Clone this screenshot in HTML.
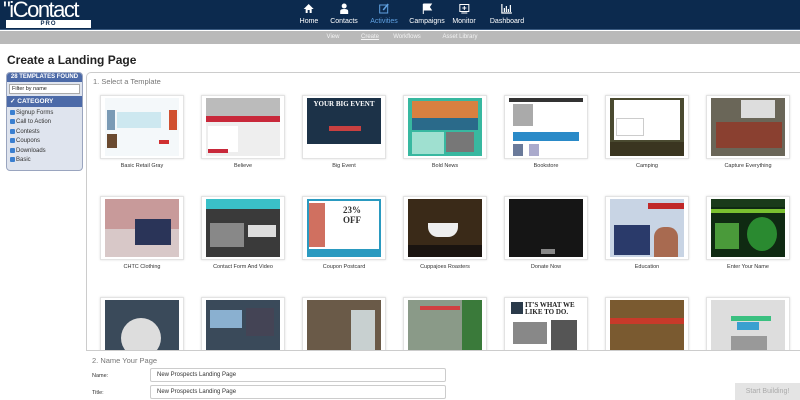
<!DOCTYPE html>
<html><head><meta charset="utf-8"><style>
*{margin:0;padding:0;box-sizing:border-box}
body{width:800px;height:400px;overflow:hidden;background:#fff;font-family:"Liberation Sans",sans-serif;position:relative}
.hdr{position:absolute;left:0;top:0;width:800px;height:30px;background:#0c2a4e;border-bottom:1px solid #3a5a80}
.logo{position:absolute;left:3px;top:0px;color:#fff;font-size:22px;letter-spacing:-1.5px;font-family:"Liberation Sans Narrow","Liberation Sans",sans-serif;line-height:20px}
.pro{position:absolute;left:6px;top:20px;width:85px;height:8px;background:#fff;color:#0c2a4e;font-size:6px;font-weight:bold;text-align:center;line-height:8px;letter-spacing:1px}
.nav{position:absolute;top:0;height:30px;text-align:center;color:#fff;font-size:7px;transform:translateX(-50%)}
.nav .ic{display:block;margin:3px auto 0;width:12px;height:11px}
.nav span{display:block;margin-top:4px;white-space:nowrap}
.sub{position:absolute;top:31px;left:0;width:800px;height:13px;background:#b9b9b9}
.sub span{position:absolute;top:3px;font-size:6px;color:#f4f4f4;transform:translateX(-50%)}
h1{position:absolute;left:7px;top:53px;font-size:12px;color:#222;font-weight:bold;font-family:"Liberation Sans Narrow","Liberation Sans",sans-serif}
.side{position:absolute;left:6px;top:72px;width:77px;height:99px;background:#dfe4ee;border:1px solid #9aa5bf;border-radius:4px;overflow:hidden}
.side .t{background:#4c6aa8;color:#fff;font-size:6px;font-weight:bold;text-align:center;height:9px;line-height:9px}
.side .f{margin:2px 2px;height:10px;background:#fff;border:1px solid #aaa;font-size:5.5px;line-height:8px;padding-left:2px;color:#222}
.side .c{background:#4c6aa8;color:#fff;font-size:6.5px;font-weight:bold;height:11px;line-height:11px;padding-left:3px;margin-top:1px;margin-bottom:2px}
.side .i{font-size:6px;color:#333;height:9.4px;line-height:9.4px;padding-left:3px}
.side .i b{display:inline-block;width:5px;height:5px;background:#3a7fd0;margin-right:1px;vertical-align:-1px;border-radius:1px}
.main{position:absolute;left:86px;top:72px;width:720px;height:290px;border:1px solid #ccc;border-radius:5px 0 0 0;border-right:none}
.sel{position:absolute;left:93px;top:77px;font-size:7.5px;color:#777}
.th{position:absolute;width:84px;height:64px;border:1px solid #e3e3e3;box-shadow:0 0 2px #ddd;background:#fff;padding:2px 4px;overflow:hidden}
.th .in{width:100%;height:100%;position:relative;overflow:hidden}
.lb{position:absolute;width:84px;text-align:center;font-size:5.5px;color:#333}
.bot{position:absolute;left:86px;top:350px;width:714px;height:50px;background:#fff;border-top:1px solid #ccc}
.bot .h{position:absolute;left:6px;top:5px;font-size:7.5px;color:#777}
.bot .l{position:absolute;left:6px;font-size:5.5px;color:#333}
.bot .inp{position:absolute;left:64px;width:296px;height:14px;border:1px solid #ccc;border-radius:2px;font-size:6px;line-height:12px;padding-left:6px;color:#333}
.btn{position:absolute;left:735px;top:383px;width:65px;height:17px;background:#e4e4e4;color:#aaa;font-size:7px;line-height:17px;text-align:center}
</style></head><body>
<div class="hdr">
<div class="logo">"iContact</div>
<div class="pro">PRO</div>
<div class="nav" style="left:309px"><svg class="ic" viewBox="0 0 12 11"><path d="M6 1L1 6h2v4h2V7h2v3h2V6h2z" fill="#fff"/></svg><span>Home</span></div>
<div class="nav" style="left:344px"><svg class="ic" viewBox="0 0 12 11"><circle cx="6" cy="3" r="2.5" fill="#fff"/><path d="M2 11V8q0-2 4-2t4 2v3z" fill="#fff"/></svg><span>Contacts</span></div>
<div class="nav" style="left:384px;color:#5fa0e0"><svg class="ic" viewBox="0 0 12 11"><rect x="1.5" y="2" width="8" height="8" fill="none" stroke="#5fa0e0"/><path d="M5 7l5-6" stroke="#5fa0e0" stroke-width="1.5"/></svg><span>Activities</span></div>
<div class="nav" style="left:427px"><svg class="ic" viewBox="0 0 12 11"><path d="M2 1v10M2 1h8l-2 3 2 3H2" fill="#fff" stroke="#fff"/></svg><span>Campaigns</span></div>
<div class="nav" style="left:464px"><svg class="ic" viewBox="0 0 12 11"><rect x="1.5" y="1.5" width="9" height="7" fill="none" stroke="#fff"/><path d="M4 5h4M6 3v4M3 10h6" stroke="#fff"/></svg><span>Monitor</span></div>
<div class="nav" style="left:507px"><svg class="ic" viewBox="0 0 12 11"><path d="M1 1v9h10M3.5 9V5M5.5 9V3M7.5 9V6M9.5 9V2" stroke="#fff" fill="none" stroke-width="1.2"/></svg><span>Dashboard</span></div>
</div>
<div class="sub"><span style="left:333px">View</span><span style="left:370px;text-decoration:underline">Create</span><span style="left:407px">Workflows</span><span style="left:460px">Asset Library</span></div>
<h1>Create a Landing Page</h1>
<div class="side"><div class="t">28 TEMPLATES FOUND</div><div class="f">Filter by name</div><div class="c">✓ CATEGORY</div>
<div class="i"><b></b>Signup Forms</div><div class="i"><b></b>Call to Action</div><div class="i"><b></b>Contests</div><div class="i"><b></b>Coupons</div><div class="i"><b></b>Downloads</div><div class="i"><b></b>Basic</div></div>
<div class="main"></div>
<div class="sel">1. Select a Template</div>

<div class="th" style="left:100px;top:95px"><div class="in" style="background:#f4f8fa"><div style="position:absolute;left:12px;top:14px;width:44px;height:16px;background:#cde8f0"></div><div style="position:absolute;left:2px;top:12px;width:8px;height:20px;background:#7a9ab5"></div><div style="position:absolute;right:2px;top:12px;width:8px;height:20px;background:#d05030"></div><div style="position:absolute;left:2px;top:36px;width:10px;height:14px;background:#6a4a30"></div><div style="position:absolute;right:10px;top:42px;width:10px;height:4px;background:#d03030"></div></div></div>
<div class="th" style="left:201px;top:95px"><div class="in" style="background:#eee"><div style="height:18px;background:#bbb"></div><div style="height:6px;background:#c8283a"></div><div style="position:absolute;left:2px;top:28px;width:30px;height:26px;background:#fff"></div><div style="position:absolute;left:2px;top:51px;width:20px;height:4px;background:#c8283a"></div></div></div>
<div class="th" style="left:302px;top:95px"><div class="in" style="background:#fff"><div style="height:46px;background:#1c3248;color:#fff;font-size:7px;font-weight:bold;text-align:center;padding-top:2px;font-family:'Liberation Serif',serif">YOUR BIG EVENT</div><div style="position:absolute;left:22px;top:28px;width:32px;height:5px;background:#c84040"></div></div></div>
<div class="th" style="left:403px;top:95px"><div class="in" style="background:#38b8a0"><div style="position:absolute;left:4px;top:3px;right:4px;height:28px;background:#d88040"></div><div style="position:absolute;left:4px;top:20px;right:4px;height:12px;background:#2a6a8a"></div><div style="position:absolute;left:4px;top:34px;width:32px;height:22px;background:#9fe0d0"></div><div style="position:absolute;left:38px;top:34px;width:28px;height:20px;background:#777"></div></div></div>
<div class="th" style="left:504px;top:95px"><div class="in" style="background:#fff"><div style="height:4px;background:#333"></div><div style="position:absolute;left:4px;top:6px;width:20px;height:22px;background:#aaa"></div><div style="position:absolute;left:4px;top:34px;right:4px;height:9px;background:#2a8ac8"></div><div style="position:absolute;left:4px;top:46px;width:10px;height:14px;background:#6a7a9a"></div><div style="position:absolute;left:20px;top:46px;width:10px;height:14px;background:#aac"></div></div></div>
<div class="th" style="left:605px;top:95px"><div class="in" style="background:#4a4a30"><div style="position:absolute;left:4px;top:2px;right:4px;height:40px;background:#fff"></div><div style="position:absolute;left:6px;top:20px;width:28px;height:18px;border:1px solid #ccc"></div><div style="position:absolute;left:0;right:0;top:44px;height:20px;background:#3a3520"></div></div></div>
<div class="th" style="left:706px;top:95px"><div class="in" style="background:#6a6658"><div style="position:absolute;left:30px;top:2px;width:34px;height:18px;background:#ddd"></div><div style="position:absolute;left:5px;top:24px;width:66px;height:26px;background:#8a4030"></div></div></div>
<div class="lb" style="left:100px;top:163px">Basic Retail Gray</div><div class="lb" style="left:201px;top:163px">Believe</div><div class="lb" style="left:302px;top:163px">Big Event</div><div class="lb" style="left:403px;top:163px">Bold News</div><div class="lb" style="left:504px;top:163px">Bookstore</div><div class="lb" style="left:605px;top:163px">Camping</div><div class="lb" style="left:706px;top:163px">Capture Everything</div>

<div class="th" style="left:100px;top:196px"><div class="in" style="background:#c89a9a"><div style="position:absolute;left:0;right:0;top:30px;height:30px;background:#d8c8c8"></div><div style="position:absolute;left:30px;top:20px;width:36px;height:26px;background:#2a3458"></div></div></div>
<div class="th" style="left:201px;top:196px"><div class="in" style="background:#3a3a3a"><div style="height:10px;background:#3ac0c8"></div><div style="position:absolute;left:4px;top:24px;width:34px;height:24px;background:#888"></div><div style="position:absolute;left:42px;top:26px;width:28px;height:12px;background:#ddd"></div></div></div>
<div class="th" style="left:302px;top:196px"><div class="in" style="background:#2a9ac0"><div style="position:absolute;left:2px;top:2px;right:2px;height:48px;background:#fff"></div><div style="position:absolute;left:2px;top:4px;width:16px;height:44px;background:#d07060"></div><div style="position:absolute;left:36px;top:6px;font-size:9px;font-weight:bold;color:#333;font-family:'Liberation Serif',serif">23% OFF</div></div></div>
<div class="th" style="left:403px;top:196px"><div class="in" style="background:#3a2a18"><div style="position:absolute;left:20px;top:24px;width:30px;height:14px;background:#eee;border-radius:0 0 10px 10px"></div><div style="position:absolute;left:0;right:0;top:46px;height:14px;background:#1a1410"></div></div></div>
<div class="th" style="left:504px;top:196px"><div class="in" style="background:#151515"><div style="position:absolute;left:32px;top:50px;width:14px;height:5px;background:#888"></div></div></div>
<div class="th" style="left:605px;top:196px"><div class="in" style="background:#c8d4e4"><div style="position:absolute;left:38px;top:4px;width:38px;height:6px;background:#c02828"></div><div style="position:absolute;left:4px;top:26px;width:36px;height:30px;background:#2a3a6a"></div><div style="position:absolute;left:44px;top:28px;width:24px;height:30px;background:#a86a50;border-radius:10px 10px 0 0"></div></div></div>
<div class="th" style="left:706px;top:196px"><div class="in" style="background:#0f2a12"><div style="height:8px;background:#1a3a1a"></div><div style="position:absolute;left:0;right:0;top:10px;height:4px;background:#7ac030"></div><div style="position:absolute;left:4px;top:24px;width:24px;height:26px;background:#4a9a3a"></div><div style="position:absolute;left:36px;top:18px;width:30px;height:34px;background:#2a8a30;border-radius:50%"></div></div></div>
<div class="lb" style="left:100px;top:264px">CHTC Clothing</div><div class="lb" style="left:201px;top:264px">Contact Form And Video</div><div class="lb" style="left:302px;top:264px">Coupon Postcard</div><div class="lb" style="left:403px;top:264px">Cuppajoes Roasters</div><div class="lb" style="left:504px;top:264px">Donate Now</div><div class="lb" style="left:605px;top:264px">Education</div><div class="lb" style="left:706px;top:264px">Enter Your Name</div>

<div class="th" style="left:100px;top:297px"><div class="in" style="background:#3a4a5a"><div style="position:absolute;left:16px;top:18px;width:40px;height:40px;border-radius:50%;background:#ddd"></div></div></div>
<div class="th" style="left:201px;top:297px"><div class="in" style="background:#3a4a5a"><div style="position:absolute;left:4px;top:10px;width:32px;height:18px;background:#8ab0d0"></div><div style="position:absolute;left:40px;top:8px;width:28px;height:28px;background:#445"></div></div></div>
<div class="th" style="left:302px;top:297px"><div class="in" style="background:#6a5a48"><div style="position:absolute;left:44px;top:10px;width:24px;height:40px;background:#c8d0d0"></div></div></div>
<div class="th" style="left:403px;top:297px"><div class="in" style="background:#8a9a88"><div style="position:absolute;left:12px;top:6px;width:40px;height:4px;background:#d04040"></div><div style="position:absolute;right:0;top:0;width:20px;height:60px;background:#3a7a3a"></div></div></div>
<div class="th" style="left:504px;top:297px"><div class="in" style="background:#fff"><div style="position:absolute;left:2px;top:2px;width:12px;height:12px;background:#2a3a4a"></div><div style="position:absolute;left:16px;top:2px;font-size:7px;font-weight:bold;color:#222;line-height:7px;font-family:'Liberation Serif',serif">IT'S WHAT WE LIKE TO DO.</div><div style="position:absolute;left:4px;top:22px;width:34px;height:22px;background:#888"></div><div style="position:absolute;left:42px;top:20px;width:26px;height:30px;background:#555"></div></div></div>
<div class="th" style="left:605px;top:297px"><div class="in" style="background:#7a5a30"><div style="position:absolute;left:0;right:0;top:18px;height:6px;background:#c83a2a"></div></div></div>
<div class="th" style="left:706px;top:297px"><div class="in" style="background:#ddd"><div style="position:absolute;left:20px;top:16px;width:40px;height:5px;background:#3ac080"></div><div style="position:absolute;left:26px;top:22px;width:22px;height:8px;background:#3aa0d0"></div><div style="position:absolute;left:20px;top:36px;width:36px;height:24px;background:#999"></div></div></div>

<div class="bot"><div class="h">2. Name Your Page</div>
<div class="l" style="top:22px">Name:</div><div class="inp" style="top:17px">New Prospects Landing Page</div>
<div class="l" style="top:39px">Title:</div><div class="inp" style="top:34px">New Prospects Landing Page</div></div>
<div class="btn">Start Building!</div>
</body></html>
